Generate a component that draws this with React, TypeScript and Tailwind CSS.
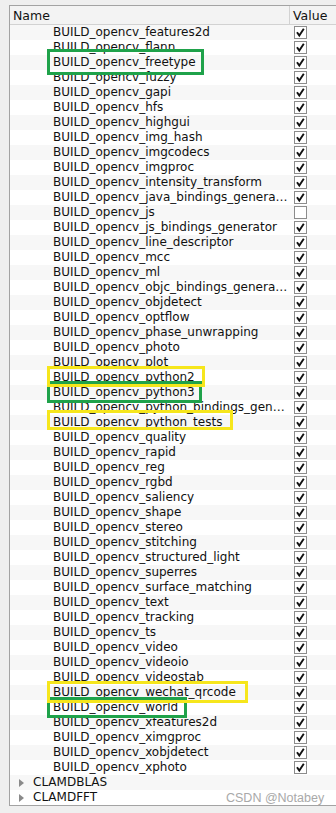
import React from "react";

const items: { name: string; checked?: boolean }[] = [
  { name: "BUILD_opencv_features2d" },
  { name: "BUILD_opencv_flann" },
  { name: "BUILD_opencv_freetype" },
  { name: "BUILD_opencv_fuzzy" },
  { name: "BUILD_opencv_gapi" },
  { name: "BUILD_opencv_hfs" },
  { name: "BUILD_opencv_highgui" },
  { name: "BUILD_opencv_img_hash" },
  { name: "BUILD_opencv_imgcodecs" },
  { name: "BUILD_opencv_imgproc" },
  { name: "BUILD_opencv_intensity_transform" },
  { name: "BUILD_opencv_java_bindings_genera…" },
  { name: "BUILD_opencv_js", checked: false },
  { name: "BUILD_opencv_js_bindings_generator" },
  { name: "BUILD_opencv_line_descriptor" },
  { name: "BUILD_opencv_mcc" },
  { name: "BUILD_opencv_ml" },
  { name: "BUILD_opencv_objc_bindings_genera…" },
  { name: "BUILD_opencv_objdetect" },
  { name: "BUILD_opencv_optflow" },
  { name: "BUILD_opencv_phase_unwrapping" },
  { name: "BUILD_opencv_photo" },
  { name: "BUILD_opencv_plot" },
  { name: "BUILD_opencv_python2" },
  { name: "BUILD_opencv_python3" },
  { name: "BUILD_opencv_python_bindings_gen…" },
  { name: "BUILD_opencv_python_tests" },
  { name: "BUILD_opencv_quality" },
  { name: "BUILD_opencv_rapid" },
  { name: "BUILD_opencv_reg" },
  { name: "BUILD_opencv_rgbd" },
  { name: "BUILD_opencv_saliency" },
  { name: "BUILD_opencv_shape" },
  { name: "BUILD_opencv_stereo" },
  { name: "BUILD_opencv_stitching" },
  { name: "BUILD_opencv_structured_light" },
  { name: "BUILD_opencv_superres" },
  { name: "BUILD_opencv_surface_matching" },
  { name: "BUILD_opencv_text" },
  { name: "BUILD_opencv_tracking" },
  { name: "BUILD_opencv_ts" },
  { name: "BUILD_opencv_video" },
  { name: "BUILD_opencv_videoio" },
  { name: "BUILD_opencv_videostab" },
  { name: "BUILD_opencv_wechat_qrcode" },
  { name: "BUILD_opencv_world" },
  { name: "BUILD_opencv_xfeatures2d" },
  { name: "BUILD_opencv_ximgproc" },
  { name: "BUILD_opencv_xobjdetect" },
  { name: "BUILD_opencv_xphoto" },
];

function CheckBox({ checked }: { checked: boolean }) {
  return (
    <div className="w-[13px] h-[13px] border border-[#8c8c8c] bg-white flex items-center justify-center">
      {checked && (
        <svg width="11" height="11" viewBox="0 0 11 11">
          <polyline
            points="2,5.2 4.3,8.6 8.8,1.8"
            fill="none"
            stroke="#111"
            strokeWidth="1.9"
            strokeLinejoin="miter"
            strokeLinecap="butt"
          />
        </svg>
      )}
    </div>
  );
}

function Arrow() {
  return (
    <svg width="5" height="8" viewBox="0 0 5 8">
      <polygon points="0,0 5,4 0,8" fill="#8a8a8a" />
    </svg>
  );
}

export default function App() {
  const groups = ["CLAMDBLAS", "CLAMDFFT"];
  return (
    <div className="relative w-[336px] h-[813px] bg-[#efefef] overflow-hidden font-['DejaVu_Sans',sans-serif] text-[12px] text-[#111]">
      <div className="ml-[9px] mt-[5px] w-[327px] border-l border-t border-b border-[#a3a3a3] bg-white">
        <div className="flex h-[19px] bg-[#f3f3f3] border-b border-[#d2d2d2] leading-[19px] text-[12.5px]">
          <div className="w-[280px] pl-[3px] border-r border-[#d2d2d2]">Name</div>
          <div className="pl-[3px]">Value</div>
        </div>
        {items.map((it, i) => (
          <div
            key={it.name}
            className={`flex h-[15px] leading-[15px] ${i % 2 === 0 ? "bg-[#f7f7f7]" : "bg-white"}`}
          >
            <div className="w-[280px] pl-[43px] whitespace-nowrap">{it.name}</div>
            <div className="pl-[4px] pt-[1px]">
              <CheckBox checked={it.checked !== false} />
            </div>
          </div>
        ))}
        {groups.map((g, j) => (
          <div
            key={g}
            className={`flex items-center h-[15px] leading-[15px] ${(items.length + j) % 2 === 0 ? "bg-[#f7f7f7]" : "bg-white"}`}
          >
            <div className="w-[23px] pl-[9px] flex items-center">
              <Arrow />
            </div>
            <div className="whitespace-nowrap">{g}</div>
          </div>
        ))}
      </div>

      {/* annotation boxes drawn over the list */}
      <div className="absolute left-[47px] top-[49px] w-[157px] h-[26px] border-[3px] border-[#1fa24a]" />
      <div className="absolute left-[47px] top-[381px] w-[155px] h-[22px] border-[3px] border-[#1fa24a]" />
      <div className="absolute left-[47px] top-[366px] w-[158px] h-[21px] border-[3px] border-[#f6e61c]" />
      <div className="absolute left-[47px] top-[410px] w-[186px] h-[20px] border-[3px] border-[#f6e61c]" />
      <div className="absolute left-[47px] top-[697px] w-[140px] h-[21px] border-[3px] border-[#1fa24a]" />
      <div className="absolute left-[47px] top-[681px] w-[201px] h-[22px] border-[3px] border-[#f6e61c]" />

      <div className="absolute left-[226px] top-[789px] font-['Liberation_Sans',sans-serif] text-[12.5px] text-[#a9a9a9] whitespace-nowrap">
        CSDN @Notabey
      </div>
    </div>
  );
}
